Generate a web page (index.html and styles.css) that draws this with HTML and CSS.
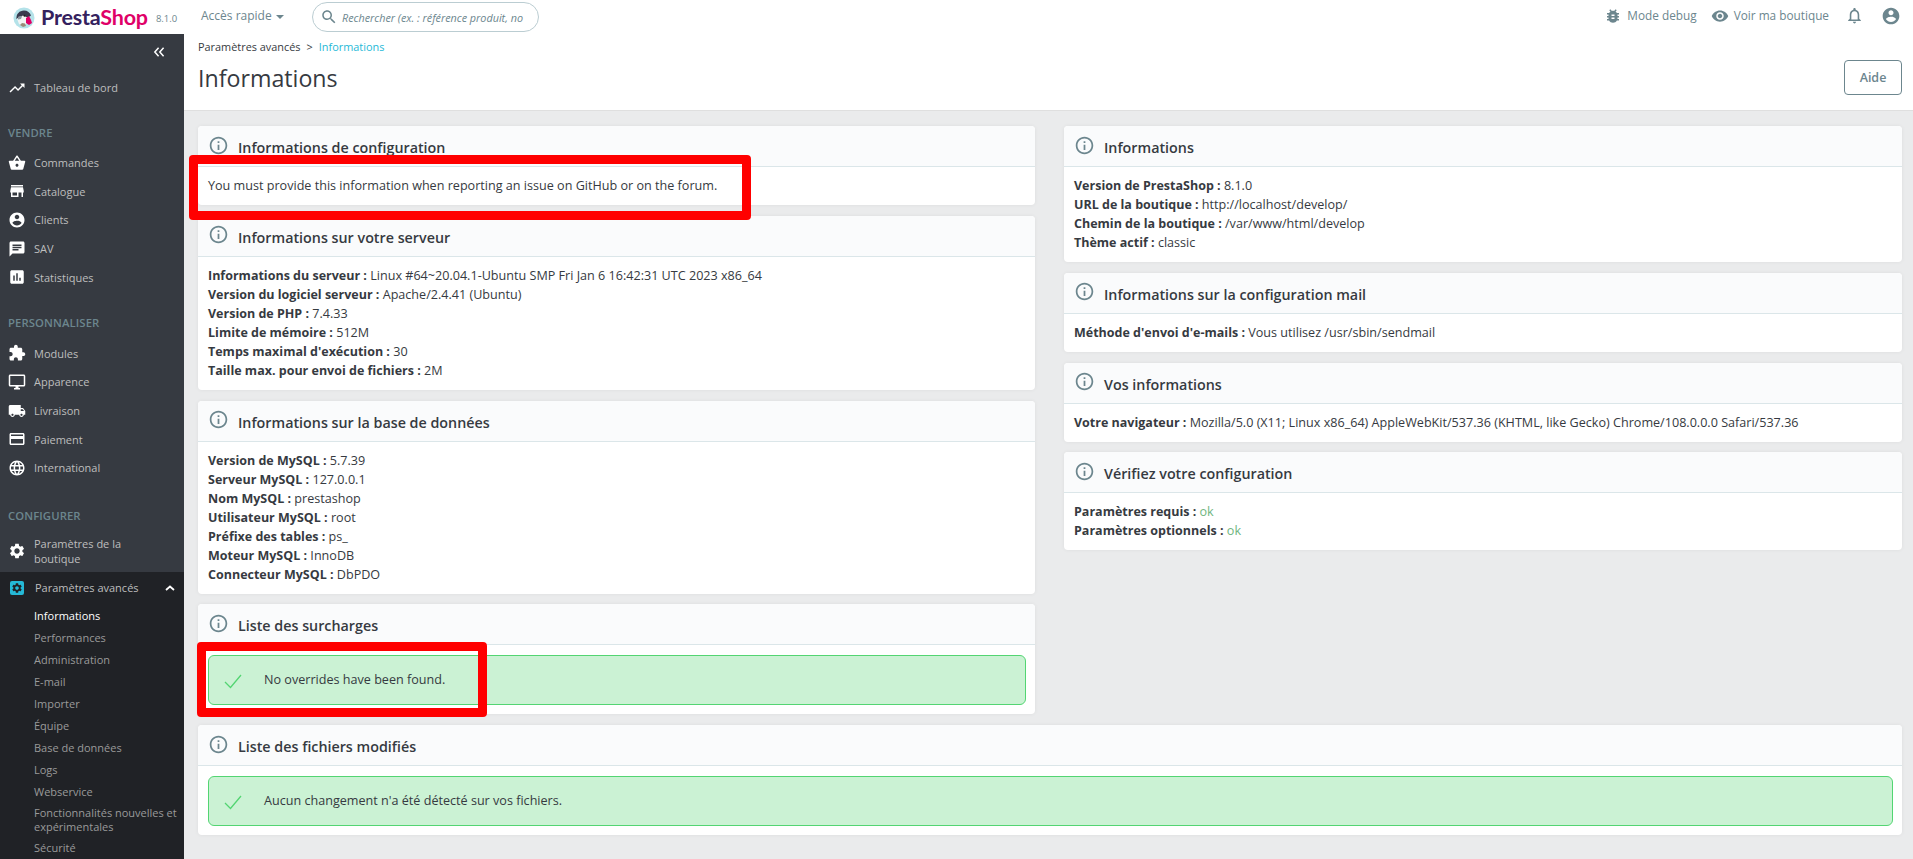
FILE: index.html
```html
<!DOCTYPE html>
<html lang="fr">
<head>
<meta charset="utf-8">
<title>Informations • PrestaShop</title>
<link rel="stylesheet" href="styles.css">
</head>
<body>
<header class="topbar">
  <div class="logo">
    <svg class="puffin" viewBox="0 0 22 22" width="22" height="22">
      <circle cx="11" cy="11" r="10.500" fill="#b4e2e9"/>
      <path d="M3.500 12C3 7 6.500 3.500 11 3.500c3.500 0 6 2 7 5l-3 2-5-1.500-4 2.500z" fill="#3a3a4e"/>
      <path d="M4 11.500 10 8.500l5 2.500-1 5.500-4 2.500-4-2z" fill="#f2f4f4"/>
      <path d="M5 10c1-1 3-1.200 4-.6L8 12l-3 .5z" fill="#8d99a1"/>
      <circle cx="11.500" cy="8.800" r="1" fill="#222"/>
      <path d="M13 11l3-2 2 4 1 3-3 2-3-2z" fill="#df0067"/>
      <path d="M7 18l2-2 3 .5 1 2.500-3 1z" fill="#9a8b78"/>
    </svg>
    <span class="brand"><span class="brand-a">Presta</span><span class="brand-b">Shop</span></span>
    <span class="version">8.1.0</span>
  </div>
  <div class="quick">Accès rapide<span class="caret"></span></div>
  <div class="search">
    <svg class="ic-search" viewBox="0 0 24 24"><path d="M15.5 14h-.79l-.28-.27C15.41 12.59 16 11.11 16 9.5 16 5.91 13.09 3 9.5 3S3 5.91 3 9.5 5.91 16 9.5 16c1.61 0 3.09-.59 4.23-1.57l.27.28v.79l5 4.99L20.49 19l-4.99-5zm-6 0C7.01 14 5 11.99 5 9.5S7.01 5 9.5 5 14 7.01 14 9.5 11.99 14 9.5 14z"/></svg>
    <span class="placeholder">Rechercher (ex. : référence produit, no</span>
  </div>
  <nav class="top-actions">
    <span class="top-link"><svg class="ic-top" viewBox="0 0 24 24"><path d="M20 8h-2.81c-.45-.78-1.07-1.45-1.82-1.96L17 4.41 15.59 3l-2.17 2.17C12.96 5.06 12.49 5 12 5c-.49 0-.96.06-1.41.17L8.41 3 7 4.41l1.62 1.63C7.88 6.55 7.26 7.22 6.81 8H4v2h2.09c-.05.33-.09.66-.09 1v1H4v2h2v1c0 .34.04.67.09 1H4v2h2.81c1.04 1.79 2.97 3 5.19 3s4.15-1.21 5.19-3H20v-2h-2.09c.05-.33.09-.66.09-1v-1h2v-2h-2v-1c0-.34-.04-.67-.09-1H20V8zm-6 8h-4v-2h4v2zm0-4h-4v-2h4v2z"/></svg>Mode debug</span>
    <span class="top-link"><svg class="ic-top" viewBox="0 0 24 24"><path d="M12 4.5C7 4.5 2.73 7.61 1 12c1.73 4.39 6 7.5 11 7.5s9.27-3.11 11-7.5c-1.73-4.39-6-7.5-11-7.5zM12 17c-2.76 0-5-2.24-5-5s2.24-5 5-5 5 2.24 5 5-2.24 5-5 5zm0-8c-1.66 0-3 1.34-3 3s1.34 3 3 3 3-1.34 3-3-1.34-3-3-3z"/></svg>Voir ma boutique</span>
    <svg class="ic-bell" viewBox="0 0 24 24"><path d="M12 22c1.1 0 2-.9 2-2h-4c0 1.1.9 2 2 2zm6-6v-5c0-3.07-1.63-5.64-4.5-6.32V4c0-.83-.67-1.5-1.5-1.5s-1.5.67-1.5 1.5v.68C7.64 5.36 6 7.92 6 11v5l-2 2v1h16v-1l-2-2zm-2 1H8v-6c0-2.48 1.51-4.5 4-4.5s4 2.02 4 4.5v6z"/></svg>
    <svg class="ic-account" viewBox="0 0 24 24"><path d="M12 2C6.48 2 2 6.48 2 12s4.48 10 10 10 10-4.48 10-10S17.52 2 12 2zm0 3c1.66 0 3 1.34 3 3s-1.34 3-3 3-3-1.34-3-3 1.34-3 3-3zm0 14.2c-2.5 0-4.71-1.28-6-3.22.03-1.99 4-3.08 6-3.08 1.99 0 5.97 1.09 6 3.08-1.29 1.94-3.5 3.22-6 3.22z"/></svg>
  </nav>
</header>

<div class="shell">
  <aside class="sidebar">
    <div class="collapse"><svg viewBox="0 0 14 12" width="12" height="10"><path d="M6.5 1 2 6l4.500 5M12.500 1 8 6l4.500 5" fill="none" stroke="#fff" stroke-width="1.800"/></svg></div>
    <a class="item first"><svg class="ic" viewBox="0 0 24 24"><path d="M16 6l2.290 2.290-4.880 4.880-4-4L2 16.590 3.410 18l6-6 4 4 6.300-6.290L22 12V6z"/></svg>Tableau de bord</a>

    <div class="section">Vendre</div>
    <a class="item"><svg class="ic" viewBox="0 0 24 24"><path d="M17.210 9l-4.380-6.560c-.19-.28-.51-.42-.83-.42-.32 0-.64.14-.83.43L6.790 9H2c-.55 0-1 .45-1 1 0 .09.01.18.04.27l2.540 9.270c.23.84 1 1.460 1.920 1.460h13c.92 0 1.690-.62 1.930-1.460l2.540-9.270L23 10c0-.55-.45-1-1-1h-4.790zM9 9l3-4.400L15 9H9zm3 8c-1.100 0-2-.9-2-2s.9-2 2-2 2 .9 2 2-.9 2-2 2z"/></svg>Commandes</a>
    <a class="item"><svg class="ic" viewBox="0 0 24 24"><path d="M20 4H4v2h16V4zm1 10v-2l-1-5H4l-1 5v2h1v6h10v-6h4v6h2v-6h1zm-9 4H6v-4h6v4z"/></svg>Catalogue</a>
    <a class="item"><svg class="ic" viewBox="0 0 24 24"><path d="M12 2C6.480 2 2 6.480 2 12s4.480 10 10 10 10-4.480 10-10S17.520 2 12 2zm0 3c1.660 0 3 1.340 3 3s-1.340 3-3 3-3-1.340-3-3 1.340-3 3-3zm0 14.200c-2.500 0-4.710-1.280-6-3.220.03-1.990 4-3.080 6-3.080 1.990 0 5.970 1.090 6 3.080-1.290 1.940-3.500 3.220-6 3.220z"/></svg>Clients</a>
    <a class="item"><svg class="ic" viewBox="0 0 24 24"><path d="M20 2H4c-1.100 0-1.990.9-1.990 2L2 22l4-4h14c1.100 0 2-.9 2-2V4c0-1.100-.9-2-2-2zM6 9h12v2H6V9zm8 5H6v-2h8v2zm4-6H6V6h12v2z"/></svg>SAV</a>
    <a class="item"><svg class="ic" viewBox="0 0 24 24"><path d="M19 3H5c-1.100 0-2 .9-2 2v14c0 1.100.9 2 2 2h14c1.100 0 2-.9 2-2V5c0-1.100-.9-2-2-2zM9 17H7v-7h2v7zm4 0h-2V7h2v10zm4 0h-2v-4h2v4z"/></svg>Statistiques</a>

    <div class="section wide">Personnaliser</div>
    <a class="item"><svg class="ic" viewBox="0 0 24 24"><path d="M20.500 11H19V7c0-1.100-.9-2-2-2h-4V3.500C13 2.120 11.880 1 10.500 1S8 2.120 8 3.500V5H4c-1.100 0-1.990.9-1.990 2v3.800H3.500c1.490 0 2.700 1.210 2.700 2.700s-1.210 2.700-2.700 2.700H2V20c0 1.100.9 2 2 2h3.800v-1.500c0-1.490 1.210-2.700 2.700-2.700 1.490 0 2.700 1.210 2.700 2.700V22H17c1.100 0 2-.9 2-2v-4h1.500c1.380 0 2.500-1.120 2.500-2.500S21.880 11 20.500 11z"/></svg>Modules</a>
    <a class="item"><svg class="ic" viewBox="0 0 24 24"><path d="M21 2H3c-1.100 0-2 .9-2 2v12c0 1.100.9 2 2 2h7v2H8v2h8v-2h-2v-2h7c1.100 0 2-.9 2-2V4c0-1.100-.9-2-2-2zm0 14H3V4h18v12z"/></svg>Apparence</a>
    <a class="item"><svg class="ic" viewBox="0 0 24 24"><path d="M20 8h-3V4H3c-1.100 0-2 .9-2 2v11h2c0 1.660 1.340 3 3 3s3-1.340 3-3h6c0 1.660 1.340 3 3 3s3-1.340 3-3h2v-5l-3-4zM6 18.500c-.83 0-1.500-.67-1.500-1.500s.67-1.500 1.500-1.500 1.500.67 1.500 1.500-.67 1.500-1.500 1.500zm13.500-9l1.960 2.500H17V9.500h2.500zm-1.500 9c-.83 0-1.500-.67-1.500-1.500s.67-1.500 1.500-1.500 1.500.67 1.500 1.500-.67 1.500-1.500 1.500z"/></svg>Livraison</a>
    <a class="item"><svg class="ic" viewBox="0 0 24 24"><path d="M20 4H4c-1.110 0-1.990.89-1.990 2L2 18c0 1.110.89 2 2 2h16c1.110 0 2-.89 2-2V6c0-1.110-.89-2-2-2zm0 14H4v-6h16v6zm0-10H4V6h16v2z"/></svg>Paiement</a>
    <a class="item"><svg class="ic" viewBox="0 0 24 24"><path d="M11.990 2C6.470 2 2 6.480 2 12s4.470 10 9.990 10C17.520 22 22 17.520 22 12S17.520 2 11.990 2zm6.930 6h-2.950c-.32-1.250-.78-2.450-1.380-3.560 1.840.63 3.370 1.910 4.330 3.560zM12 4.040c.83 1.200 1.480 2.530 1.910 3.960h-3.820c.43-1.430 1.080-2.760 1.910-3.960zM4.260 14C4.100 13.360 4 12.690 4 12s.1-1.360.26-2h3.380c-.08.66-.14 1.320-.14 2 0 .68.06 1.340.14 2H4.260zm.82 2h2.950c.32 1.250.78 2.450 1.380 3.560-1.840-.63-3.370-1.900-4.330-3.560zm2.950-8H5.080c.96-1.660 2.490-2.930 4.330-3.560C8.810 5.550 8.350 6.750 8.030 8zM12 19.960c-.83-1.200-1.480-2.530-1.910-3.960h3.820c-.43 1.430-1.080 2.760-1.910 3.960zM14.340 14H9.660c-.09-.66-.16-1.320-.16-2 0-.68.07-1.350.16-2h4.680c.09.65.16 1.320.16 2 0 .68-.07 1.340-.16 2zm.25 5.560c.6-1.110 1.060-2.310 1.380-3.560h2.950c-.96 1.650-2.490 2.930-4.330 3.560zM16.360 14c.08-.66.14-1.320.14-2 0-.68-.06-1.340-.14-2h3.380c.16.64.26 1.310.26 2s-.1 1.360-.26 2h-3.380z"/></svg>International</a>

    <div class="section last">Configurer</div>
    <a class="item two"><svg class="ic" viewBox="0 0 24 24"><path d="M19.140 12.940c.04-.3.06-.61.06-.94 0-.32-.02-.64-.07-.94l2.030-1.580c.18-.14.23-.41.12-.61l-1.920-3.320c-.12-.22-.37-.29-.59-.22l-2.390.96c-.5-.38-1.030-.7-1.620-.94l-.36-2.540c-.04-.24-.24-.41-.48-.41h-3.840c-.24 0-.43.17-.47.41l-.36 2.540c-.59.24-1.130.57-1.620.94l-2.390-.96c-.22-.08-.47 0-.59.22L2.740 8.870c-.12.21-.08.47.12.61l2.030 1.580c-.05.3-.09.63-.09.94s.02.64.07.94l-2.030 1.580c-.18.14-.23.41-.12.61l1.920 3.320c.12.22.37.29.59.22l2.390-.96c.5.38 1.030.7 1.620.94l.36 2.540c.05.24.24.41.48.41h3.840c.24 0 .44-.17.47-.41l.36-2.540c.59-.24 1.130-.56 1.620-.94l2.390.96c.22.08.47 0 .59-.22l1.920-3.320c.12-.22.07-.47-.12-.61l-2.010-1.580zM12 15.600c-1.980 0-3.600-1.620-3.600-3.600s1.620-3.600 3.600-3.600 3.600 1.620 3.600 3.600-1.620 3.600-3.600 3.600z"/></svg><span>Paramètres de la<br>boutique</span></a>
    <div class="active-group">
      <a class="item active">
        <span class="ic-box"><svg viewBox="0 0 24 24"><path d="M19.140 12.940c.04-.3.06-.61.06-.94 0-.32-.02-.64-.07-.94l2.030-1.580c.18-.14.23-.41.12-.61l-1.920-3.320c-.12-.22-.37-.29-.59-.22l-2.390.96c-.5-.38-1.030-.7-1.620-.94l-.36-2.540c-.04-.24-.24-.41-.48-.41h-3.840c-.24 0-.43.17-.47.41l-.36 2.540c-.59.24-1.130.57-1.620.94l-2.390-.96c-.22-.08-.47 0-.59.22L2.740 8.870c-.12.21-.08.47.12.61l2.030 1.580c-.05.3-.09.63-.09.94s.02.64.07.94l-2.030 1.580c-.18.14-.23.41-.12.61l1.920 3.320c.12.22.37.29.59.22l2.390-.96c.5.38 1.030.7 1.620.94l.36 2.540c.05.24.24.41.48.41h3.840c.24 0 .44-.17.47-.41l.36-2.540c.59-.24 1.130-.56 1.620-.94l2.390.96c.22.08.47 0 .59-.22l1.920-3.320c.12-.22.07-.47-.12-.61l-2.010-1.580zM12 15.600c-1.980 0-3.600-1.620-3.600-3.600s1.620-3.600 3.600-3.600 3.600 1.620 3.600 3.600-1.620 3.600-3.600 3.600z"/></svg></span>
        <span class="grow">Paramètres avancés</span>
        <svg class="chev" viewBox="0 0 10 6" width="10" height="6"><path d="M1 5l4-3.500L9 5" fill="none" stroke="#fff" stroke-width="1.800"/></svg>
      </a>
      <a class="sub current">Informations</a>
      <a class="sub">Performances</a>
      <a class="sub">Administration</a>
      <a class="sub">E-mail</a>
      <a class="sub">Importer</a>
      <a class="sub">Équipe</a>
      <a class="sub">Base de données</a>
      <a class="sub">Logs</a>
      <a class="sub">Webservice</a>
      <a class="sub wrap">Fonctionnalités nouvelles et expérimentales</a>
      <a class="sub">Sécurité</a>
    </div>
  </aside>

  <main class="main">
    <div class="page-head">
      <div class="head-left">
        <div class="crumbs"><span>Paramètres avancés</span><span class="sep">&gt;</span><span class="crumb-cur">Informations</span></div>
        <h1>Informations</h1>
      </div>
      <button class="help">Aide</button>
    </div>

    <div class="content">
      <div class="columns">
        <div class="col">
          <section class="card">
            <h3 class="card-head"><svg class="info" viewBox="0 0 24 24"><path d="M11 7h2v2h-2zm0 4h2v6h-2zm1-9C6.480 2 2 6.480 2 12s4.480 10 10 10 10-4.480 10-10S17.520 2 12 2zm0 18c-4.410 0-8-3.590-8-8s3.590-8 8-8 8 3.590 8 8-3.590 8-8 8z"/></svg>Informations de configuration</h3>
            <div class="card-body"><p>You must provide this information when reporting an issue on GitHub or on the forum.</p></div>
          </section>
          <section class="card">
            <h3 class="card-head"><svg class="info" viewBox="0 0 24 24"><path d="M11 7h2v2h-2zm0 4h2v6h-2zm1-9C6.480 2 2 6.480 2 12s4.480 10 10 10 10-4.480 10-10S17.520 2 12 2zm0 18c-4.410 0-8-3.590-8-8s3.590-8 8-8 8 3.590 8 8-3.590 8-8 8z"/></svg>Informations sur votre serveur</h3>
            <div class="card-body">
              <p><b>Informations du serveur :</b> Linux #64~20.04.1-Ubuntu SMP Fri Jan 6 16:42:31 UTC 2023 x86_64</p>
              <p><b>Version du logiciel serveur :</b> Apache/2.4.41 (Ubuntu)</p>
              <p><b>Version de PHP :</b> 7.4.33</p>
              <p><b>Limite de mémoire :</b> 512M</p>
              <p><b>Temps maximal d'exécution :</b> 30</p>
              <p><b>Taille max. pour envoi de fichiers :</b> 2M</p>
            </div>
          </section>
          <section class="card">
            <h3 class="card-head"><svg class="info" viewBox="0 0 24 24"><path d="M11 7h2v2h-2zm0 4h2v6h-2zm1-9C6.480 2 2 6.480 2 12s4.480 10 10 10 10-4.480 10-10S17.520 2 12 2zm0 18c-4.410 0-8-3.590-8-8s3.590-8 8-8 8 3.590 8 8-3.590 8-8 8z"/></svg>Informations sur la base de données</h3>
            <div class="card-body">
              <p><b>Version de MySQL :</b> 5.7.39</p>
              <p><b>Serveur MySQL :</b> 127.0.0.1</p>
              <p><b>Nom MySQL :</b> prestashop</p>
              <p><b>Utilisateur MySQL :</b> root</p>
              <p><b>Préfixe des tables :</b> ps_</p>
              <p><b>Moteur MySQL :</b> InnoDB</p>
              <p><b>Connecteur MySQL :</b> DbPDO</p>
            </div>
          </section>
          <section class="card">
            <h3 class="card-head"><svg class="info" viewBox="0 0 24 24"><path d="M11 7h2v2h-2zm0 4h2v6h-2zm1-9C6.480 2 2 6.480 2 12s4.480 10 10 10 10-4.480 10-10S17.520 2 12 2zm0 18c-4.410 0-8-3.590-8-8s3.590-8 8-8 8 3.590 8 8-3.590 8-8 8z"/></svg>Liste des surcharges</h3>
            <div class="card-body">
              <div class="alert"><svg class="check" viewBox="0 0 20 20"><path d="M2 11l5.500 5.500L18 4" fill="none"/></svg>No overrides have been found.</div>
            </div>
          </section>
        </div>
        <div class="col">
          <section class="card">
            <h3 class="card-head"><svg class="info" viewBox="0 0 24 24"><path d="M11 7h2v2h-2zm0 4h2v6h-2zm1-9C6.480 2 2 6.480 2 12s4.480 10 10 10 10-4.480 10-10S17.520 2 12 2zm0 18c-4.410 0-8-3.590-8-8s3.590-8 8-8 8 3.590 8 8-3.590 8-8 8z"/></svg>Informations</h3>
            <div class="card-body">
              <p><b>Version de PrestaShop :</b> 8.1.0</p>
              <p><b>URL de la boutique :</b> http://localhost/develop/</p>
              <p><b>Chemin de la boutique :</b> /var/www/html/develop</p>
              <p><b>Thème actif :</b> classic</p>
            </div>
          </section>
          <section class="card">
            <h3 class="card-head"><svg class="info" viewBox="0 0 24 24"><path d="M11 7h2v2h-2zm0 4h2v6h-2zm1-9C6.480 2 2 6.480 2 12s4.480 10 10 10 10-4.480 10-10S17.520 2 12 2zm0 18c-4.410 0-8-3.590-8-8s3.590-8 8-8 8 3.590 8 8-3.590 8-8 8z"/></svg>Informations sur la configuration mail</h3>
            <div class="card-body"><p><b>Méthode d'envoi d'e-mails :</b> Vous utilisez /usr/sbin/sendmail</p></div>
          </section>
          <section class="card">
            <h3 class="card-head"><svg class="info" viewBox="0 0 24 24"><path d="M11 7h2v2h-2zm0 4h2v6h-2zm1-9C6.480 2 2 6.480 2 12s4.480 10 10 10 10-4.480 10-10S17.520 2 12 2zm0 18c-4.410 0-8-3.590-8-8s3.590-8 8-8 8 3.590 8 8-3.590 8-8 8z"/></svg>Vos informations</h3>
            <div class="card-body"><p><b>Votre navigateur :</b> Mozilla/5.0 (X11; Linux x86_64) AppleWebKit/537.36 (KHTML, like Gecko) Chrome/108.0.0.0 Safari/537.36</p></div>
          </section>
          <section class="card">
            <h3 class="card-head"><svg class="info" viewBox="0 0 24 24"><path d="M11 7h2v2h-2zm0 4h2v6h-2zm1-9C6.480 2 2 6.480 2 12s4.480 10 10 10 10-4.480 10-10S17.520 2 12 2zm0 18c-4.410 0-8-3.590-8-8s3.590-8 8-8 8 3.590 8 8-3.590 8-8 8z"/></svg>Vérifiez votre configuration</h3>
            <div class="card-body">
              <p><b>Paramètres requis :</b> <span class="ok">ok</span></p>
              <p><b>Paramètres optionnels :</b> <span class="ok">ok</span></p>
            </div>
          </section>
        </div>
      </div>
      <section class="card">
        <h3 class="card-head"><svg class="info" viewBox="0 0 24 24"><path d="M11 7h2v2h-2zm0 4h2v6h-2zm1-9C6.480 2 2 6.480 2 12s4.480 10 10 10 10-4.480 10-10S17.520 2 12 2zm0 18c-4.410 0-8-3.590-8-8s3.590-8 8-8 8 3.590 8 8-3.590 8-8 8z"/></svg>Liste des fichiers modifiés</h3>
        <div class="card-body">
          <div class="alert"><svg class="check" viewBox="0 0 20 20"><path d="M2 11l5.500 5.500L18 4" fill="none"/></svg>Aucun changement n'a été détecté sur vos fichiers.</div>
        </div>
      </section>
    </div>
  </main>
</div>
<div class="mark mark-one"></div>
<div class="mark mark-two"></div>
</body>
</html>
```

FILE: styles.css
```css
* { box-sizing: border-box; }
html, body { height: 100%; }
body {
  margin: 0;
  height: 859px;
  overflow: hidden;
  background: #eaebec;
  color: #363a41;
  font-family: "Open Sans", "Liberation Sans", sans-serif;
  font-size: 12.6px;
  line-height: 19px;
}

/* Top bar */
.topbar {
  height: 34px;
  background: #fff;
  display: flex;
  align-items: center;
}
.logo { display: flex; align-items: center; width: 201px; padding-left: 13px; }
.puffin { flex: none; margin-top: 1px; }
.brand { font-family: "Lato", "Open Sans", sans-serif; font-weight: 700; font-size: 21.5px; margin-left: 6px; letter-spacing: -0.2px; line-height: 24px; }
.brand-a { color: #34215e; }
.brand-b { color: #df0067; }
.version { font-size: 9.5px; color: #6c868e; margin-left: 8px; margin-top: 3px; }
.quick { width: 111px; font-size: 12px; color: #6c868e; margin-top: -3px; display: flex; align-items: center; }
.caret { border-top: 4px solid #6c868e; border-left: 4px solid transparent; border-right: 4px solid transparent; margin-left: 4px; margin-top: 2px; }
.search {
  width: 227px; height: 30px;
  border: 1px solid #bbcdd2;
  border-radius: 15px;
  display: flex; align-items: center;
  padding-left: 7px;
  overflow: hidden;
}
.ic-search { width: 18px; height: 18px; fill: #6c868e; flex: none; }
.placeholder { font-style: italic; font-size: 10.8px; color: #6c868e; margin-left: 4px; white-space: nowrap; }
.top-actions { margin-left: auto; display: flex; align-items: center; color: #6c868e; font-size: 11.8px; padding-right: 12px; margin-top: -3px; }
.top-link { display: flex; align-items: center; margin-right: 14px; }
.ic-top { width: 18px; height: 18px; fill: #6c868e; margin-right: 5px; }
.ic-bell { width: 19px; height: 19px; fill: #6c868e; margin-left: 2px; margin-right: 17px; }
.ic-account { width: 20px; height: 20px; fill: #6c868e; }

/* Shell */
.shell { display: flex; height: 825px; }

/* Sidebar */
.sidebar { width: 184px; flex: none; background: #363a41; overflow: hidden; color: #bebebe; font-size: 11px; line-height: 15px; }
.collapse { height: 36px; display: flex; align-items: center; justify-content: flex-end; padding-right: 19px; }
.item { display: flex; align-items: center; height: 28.700px; padding-left: 8px; }
.item.first { margin-top: 3.500px; margin-bottom: 2px; }
.item.two { height: 38px; margin-top: 6.400px; margin-bottom: 1.700px; }
.ic { width: 18px; height: 18px; fill: #fff; flex: none; margin-right: 8px; }
.section { text-transform: uppercase; font-weight: 600; color: #6c868e; height: 20px; line-height: 20px; padding-left: 8px; margin-top: 21px; margin-bottom: 5px; font-size: 11.300px; letter-spacing: 0.1px; }
.section.wide { margin-bottom: 6.200px; }
.section.last { margin-top: 23.400px; }
.active-group { background: #202226; padding-bottom: 20px; }
.item.active { height: 32px; color: #bebebe; margin-bottom: 1.500px; }
.ic-box { width: 14px; height: 14px; background: #25b9d7; border-radius: 2px; margin: 0 11px 0 2px; display: flex; align-items: center; justify-content: center; flex: none; }
.ic-box svg { width: 12px; height: 12px; fill: #202226; }
.grow { flex: 1; }
.chev { margin-right: 9px; }
.sub { display: block; padding: 2px 4px 2px 34px; height: 22px; font-size: 11px; line-height: 18px; color: #9a9a9a; }
.sub.wrap { height: 33.500px; line-height: 14px; padding-top: 3px; padding-bottom: 2px; }
.sub.current { color: #fff; }

/* Main */
.main { flex: 1; min-width: 0; display: flex; flex-direction: column; }
.page-head {
  height: 77px;
  background: #fff;
  border-bottom: 1px solid #dfdfdf;
  padding: 0 11px 0 14px;
  display: flex;
  justify-content: space-between;
}
.head-left { padding-top: 4px; }
.crumbs { font-size: 10.9px; line-height: 18px; color: #363a41; display: flex; }
.sep { margin: 0 6px; }
.crumb-cur { color: #25b9d7; }
h1 { margin: 5px 0 0; font-size: 23.2px; font-weight: 400; line-height: 34px; color: #363a41; }
.help {
  margin-top: 26px; width: 58px; height: 35px;
  background: #fff;
  border: 1px solid #6c868e;
  border-radius: 4px;
  color: #6c868e;
  font: 600 12.500px "Open Sans", sans-serif;
}

/* Content */
.content { padding: 15px 11px 0 14px; }
.columns { display: grid; grid-template-columns: 837fr 838fr; gap: 29px; }
.col { min-width: 0; }
.card { background: #fff; border-radius: 4px; margin-bottom: 10.750px; box-shadow: 0 0 4px rgba(0,0,0,.06); overflow: hidden; }
.card-head {
  margin: 0; height: 41px;
  background: #fafbfc;
  border-bottom: 1px solid #dbe6e9;
  display: flex; align-items: center;
  padding: 3px 10px 0;
  font-size: 14.300px; font-weight: 600; color: #363a41;
}
.info { width: 21px; height: 21px; fill: #6c868e; margin-right: 9px; margin-top: -5px; flex: none; }
.card-body { padding: 9px 9px 10px 10px; }
.card-body p { margin: 0; }
.card-body b { font-weight: 700; font-size: 12.5px; }
.ok { color: #70b580; }
.alert {
  height: 50px;
  margin: 1px 0 -1px;
  background: #cbf2d4;
  border: 1px solid #53d572;
  border-radius: 6px;
  display: flex; align-items: center;
  padding: 0 0 2px 14px;
}
.check { width: 20px; height: 20px; stroke: #53d572; stroke-width: 1.3; margin-right: 21px; margin-top: 3px; flex: none; }

/* Red annotation rectangles drawn over the screenshot */
.mark { position: absolute; border: 9px solid #ff0000; border-radius: 4px; }
.mark-one { left: 189px; top: 155px; width: 562px; height: 65px; }
.mark-two { left: 197px; top: 642px; width: 290px; height: 75px; }
```
